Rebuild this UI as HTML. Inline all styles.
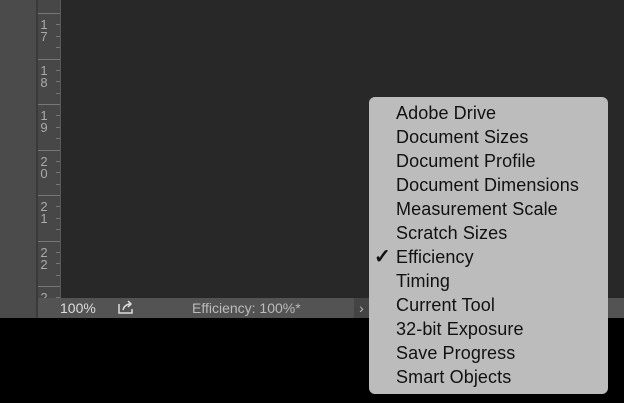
<!DOCTYPE html><html><head><style>
body{margin:0;width:624px;height:403px;background:#000;position:relative;overflow:hidden;font-family:"Liberation Sans",sans-serif}
.a{position:absolute}
.n{position:absolute;left:39px;color:#aaa;font-size:13px;line-height:12px;width:10px;text-align:center}
.t{position:absolute;background:#777;height:1px}
.m div{height:24px;line-height:24px;font-size:18px;color:#111;padding-left:27px;white-space:nowrap;letter-spacing:0.1px}
#r{position:absolute;left:0;top:0;width:624px;height:298px;overflow:hidden}
</style></head><body>
<div class="a" style="left:0;top:0;width:36px;height:318px;background:#4b4b4b"></div>
<div class="a" style="left:36px;top:0;width:2px;height:318px;background:#3a3a3a"></div>
<div class="a" style="left:38px;top:0;width:22px;height:298px;background:#474747"></div>
<div class="a" style="left:60px;top:0;width:1px;height:298px;background:#5a5a5a"></div>
<div class="a" style="left:61px;top:0;width:563px;height:298px;background:#282828"></div>
<div id="r"></div>
<div class="a" style="left:38px;top:298px;width:586px;height:20px;background:#535353"></div>
<div class="a" style="left:60px;top:300px;color:#ddd;font-size:14px">100%</div>
<svg class="a" style="left:118px;top:300px" width="16" height="14"><path d="M1 4v9h13V9" fill="none" stroke="#ddd" stroke-width="1.5"/><path d="M5 10c1-4 4-6 8-6M10 1l3 3-3 3" fill="none" stroke="#ddd" stroke-width="1.5"/></svg>
<div class="a" style="left:192px;top:300px;color:#bbb;font-size:14px">Efficiency: 100%*</div>
<div class="a" style="left:354px;top:298px;width:15px;height:20px;background:#444;color:#bbb;font-size:14px;line-height:20px;text-align:center">›</div>
<div class="a m" style="left:369px;top:97px;width:239px;height:297px;background:#bcbcbc;border-radius:6px;padding-top:4px;box-sizing:border-box">
<div>Adobe Drive</div><div>Document Sizes</div><div>Document Profile</div><div>Document Dimensions</div><div>Measurement Scale</div><div>Scratch Sizes</div><div style="position:relative"><span style="position:absolute;left:5px;font-size:20px;font-weight:bold">✓</span>Efficiency</div><div>Timing</div><div>Current Tool</div><div>32-bit Exposure</div><div>Save Progress</div><div>Smart Objects</div>
</div>
<script>
var h='';var nums=['17','18','19','20','21','22','2'];
for(var i=0;i<7;i++){var y=13+i*45.5;h+='<div class="n" style="top:'+(y+6)+'px">'+nums[i].split('').join('<br>')+'</div>';h+='<div class="t" style="left:38px;width:22px;top:'+y+'px"></div>';for(var k=1;k<4;k++)h+='<div class="t" style="left:56px;width:4px;top:'+(y+k*11.4)+'px"></div>';}
document.getElementById('r').innerHTML=h;
</script>
</body></html>
